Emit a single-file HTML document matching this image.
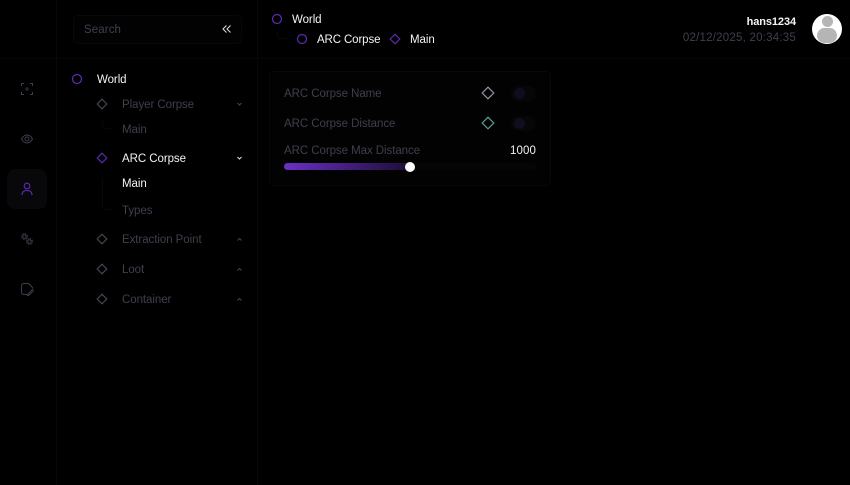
<!DOCTYPE html>
<html><head><meta charset="utf-8">
<style>
html,body{margin:0;padding:0;background:#000;}
body{width:850px;height:485px;position:relative;overflow:hidden;font-family:"Liberation Sans",sans-serif;font-size:11.5px;}
.a{position:absolute;}
.t{position:absolute;white-space:nowrap;line-height:14px;height:14px;letter-spacing:-.06px;}
.d{color:#403f4e;}
.w{color:#f4f4f6;}
svg{position:absolute;overflow:visible;}
</style></head>
<body>
<div class="a" style="left:56px;top:0;width:1px;height:485px;background:#070709"></div>
<div class="a" style="left:257px;top:0;width:1px;height:485px;background:#070709"></div>
<div class="a" style="left:0;top:58px;width:850px;height:1px;background:#070709"></div>

<!-- search -->
<div class="a" style="left:73px;top:15px;width:167px;height:27px;background:#020203;border:1px solid #08080a;border-radius:5px"></div>
<div class="t" style="left:84px;top:23px;color:#403f4e;letter-spacing:.1px">Search</div>

<!-- panel -->
<div class="a" style="left:269px;top:71px;width:280px;height:113px;background:#020203;border:1px solid #08080a;border-radius:5px"></div>
<div class="a" style="left:511px;top:86px;width:25px;height:15px;border-radius:8px;background:#060607"></div>
<div class="a" style="left:514px;top:88px;width:11px;height:11px;border-radius:50%;background:#120c20"></div>
<div class="a" style="left:511px;top:116px;width:25px;height:15px;border-radius:8px;background:#060607"></div>
<div class="a" style="left:514px;top:118px;width:11px;height:11px;border-radius:50%;background:#120c20"></div>
<div class="a" style="left:284px;top:163px;width:252px;height:7px;border-radius:4px;background:#050506"></div>
<div class="a" style="left:284px;top:163px;width:126px;height:7px;border-radius:4px 0 0 4px;background:linear-gradient(90deg,#6a30c4,#1c0d36)"></div>
<div class="a" style="left:405px;top:161.500px;width:10px;height:10px;border-radius:50%;background:#fff"></div>

<!-- active sidebar tile -->
<div class="a" style="left:7px;top:169px;width:40px;height:40px;background:#08080a;border-radius:8px"></div>

<svg style="left:0;top:0" width="850" height="485" fill="none">
<path d="M226.500 25.500L223 29L226.500 32.500M230.500 25.500L227 29L230.500 32.500" stroke="#e0e0e4" stroke-width="1"/>

<!-- sidebar icons -->
<g stroke="#3f3d4e" stroke-width="1">
<path d="M21.500 86V83.500H24M30 83.500H32.500V86M32.500 92V94.500H30M24 94.500H21.500V92"/>
<path d="M27 87V91M25 89H29" stroke="#2c2b38" stroke-width="1.200"/>
<path d="M21.500 139C23 136.300 25 135 27 135C29 135 31 136.300 32.500 139C31 141.700 29 143 27 143C25 143 23 141.700 21.500 139Z"/>
<circle cx="27" cy="139" r="2"/>
<circle cx="24.500" cy="236.500" r="1.800"/>
<circle cx="24.500" cy="236.500" r="3" stroke-dasharray="1.200 1.150"/>
<circle cx="29.500" cy="241.500" r="1.800"/>
<circle cx="29.500" cy="241.500" r="3" stroke-dasharray="1.200 1.150"/>
<path d="M28 283.500H24C22.500 283.500 21.500 284.500 21.500 286V292C21.500 293.500 22.500 294.500 24 294.500H27M28 283.500C30 284.500 31.500 286 33 288.500"/>
<path d="M27.500 294.500L33 289M28.500 295.500L33.800 290.500M27.500 294.500V295.500H28.500"/>
</g>
<circle cx="27" cy="186" r="2.800" stroke="#5f2bb8" stroke-width="1.100"/>
<path d="M22 195C22 192 24 190.500 27 190.500C30 190.500 32 192 32 195" stroke="#5f2bb8" stroke-width="1.100"/>

<!-- tree circles & diamonds -->
<circle cx="77" cy="79" r="4.500" stroke="#5f2bb8" stroke-width="1.200"/>
<circle cx="277" cy="19" r="4.500" stroke="#5f2bb8" stroke-width="1.200"/>
<circle cx="302" cy="39" r="4.500" stroke="#5f2bb8" stroke-width="1.200"/>
<g stroke-width="1.100">
<path d="M102 99.200L106.800 104L102 108.800L97.200 104Z" stroke="#4a4956"/>
<path d="M102 153.200L106.800 158L102 162.800L97.200 158Z" stroke="#5f2bb8"/>
<path d="M102 234.200L106.800 239L102 243.800L97.200 239Z" stroke="#4a4956"/>
<path d="M102 264.200L106.800 269L102 273.800L97.200 269Z" stroke="#4a4956"/>
<path d="M102 294.200L106.800 299L102 303.800L97.200 299Z" stroke="#4a4956"/>
<path d="M395 34.200L399.800 39L395 43.800L390.200 39Z" stroke="#5f2bb8"/>
<path d="M488 87.200L493.800 93L488 98.800L482.200 93Z" stroke="#a597b2"/>
<path d="M488 117.200L493.800 123L488 128.800L482.200 123Z" stroke="#5fa99b"/>
</g>

<!-- chevrons -->
<path d="M237.500 103L239.500 105L241.500 103" stroke="#45444f" stroke-width="1"/>
<path d="M237.500 157L239.500 159L241.500 157" stroke="#e0e0e4" stroke-width="1"/>
<path d="M237.500 240.500L239.500 238.500L241.500 240.500" stroke="#45444f" stroke-width="1"/>
<path d="M237.500 270.500L239.500 268.500L241.500 270.500" stroke="#45444f" stroke-width="1"/>
<path d="M237.500 300.500L239.500 298.500L241.500 300.500" stroke="#45444f" stroke-width="1"/>

<!-- connectors -->
<path d="M102.500 121V125C102.500 127.500 104 128.500 106 128.500H111" stroke="#09090b"/>
<path d="M102.500 178V205C102.500 208 104 209.500 106 209.500H111" stroke="#09090b"/>
<path d="M277.500 30V34C277.500 36.500 279 38.500 281 38.500H287" stroke="#09090b"/>
</svg>

<!-- tree text -->
<div class="t w" style="left:97px;top:73px">World</div>
<div class="t d" style="left:122px;top:98px">Player Corpse</div>
<div class="t d" style="left:122px;top:123px">Main</div>
<div class="t w" style="left:122px;top:152px">ARC Corpse</div>
<div class="t w" style="left:122px;top:177px">Main</div>
<div class="t d" style="left:122px;top:204px">Types</div>
<div class="t d" style="left:122px;top:233px">Extraction Point</div>
<div class="t d" style="left:122px;top:263px">Loot</div>
<div class="t d" style="left:122px;top:293px">Container</div>

<!-- breadcrumb -->
<div class="t w" style="left:292px;top:13px">World</div>
<div class="t w" style="left:317px;top:33px;letter-spacing:-.12px">ARC Corpse</div>
<div class="t w" style="left:410px;top:33px">Main</div>

<!-- user -->
<div class="t" style="right:54px;top:15px;font-size:11px;color:#f4f4f6;font-weight:bold;letter-spacing:-.1px">hans1234</div>
<div class="t" style="right:54px;top:31px;color:#403f4e;font-size:11.500px;letter-spacing:.22px">02/12/2025, 20:34:35</div>
<div class="a" style="left:812px;top:14px;width:30px;height:30px;border-radius:50%;background:#fff;overflow:hidden">
<div class="a" style="left:9.500px;top:2px;width:11px;height:11px;border-radius:50%;background:#b5b5b5"></div>
<div class="a" style="left:5px;top:14px;width:20px;height:15px;border-radius:8px;background:#b5b5b5"></div>
</div>

<!-- panel text -->
<div class="t d" style="left:284px;top:87px">ARC Corpse Name</div>
<div class="t d" style="left:284px;top:117px">ARC Corpse Distance</div>
<div class="t d" style="left:284px;top:144px">ARC Corpse Max Distance</div>
<div class="t w" style="right:314px;top:144px;letter-spacing:.1px">1000</div>
</body></html>
